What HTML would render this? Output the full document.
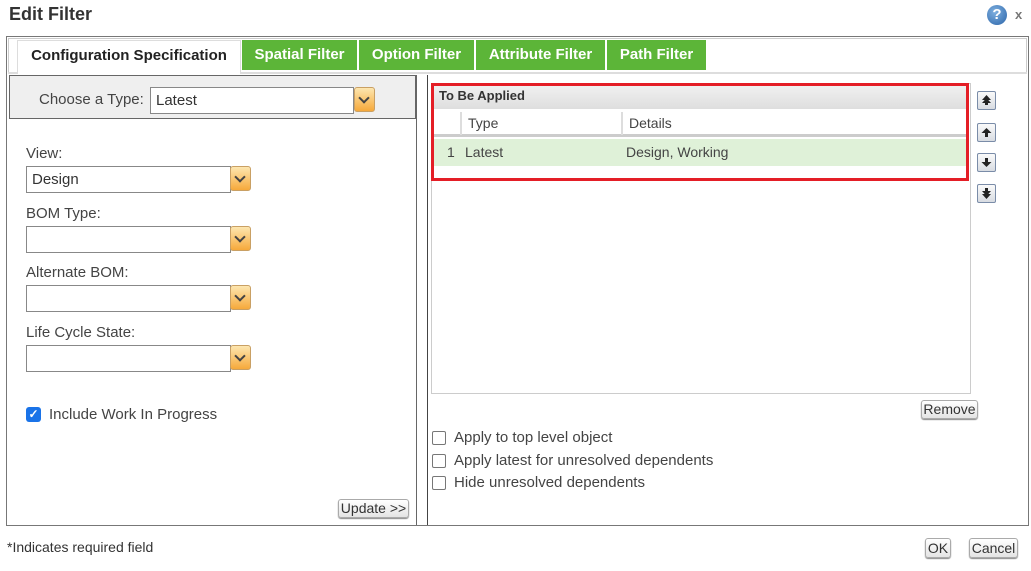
<!DOCTYPE html>
<html><head><meta charset="utf-8"><style>
*{box-sizing:border-box;margin:0;padding:0}
body{width:1031px;height:571px;background:#fff;font-family:"Liberation Sans",Arial,sans-serif;color:#333;position:relative;overflow:hidden;font-size:15px}
.a{position:absolute}
.tab{position:absolute;top:40px;height:30px;background:#5cb538;color:#fff;font-weight:bold;font-size:15px;line-height:30px;text-align:center}
.sel{position:absolute;width:205px;height:27px;border:1px solid #888;background:#fff;font-size:15px;line-height:25px;padding-left:5px}
.arr{position:absolute;width:21px;height:25px;border:1px solid #c9a064;border-radius:3px;background:linear-gradient(#fde6b0,#f6a93b);}
.arr:after{content:"";position:absolute;left:5px;top:6px;width:6px;height:6px;border-right:2.5px solid #444;border-bottom:2.5px solid #444;transform:rotate(45deg)}
.lbl{position:absolute;left:26px;font-size:15px;color:#444}
.btn{position:absolute;border:1px solid #aaa;border-radius:3px;background:linear-gradient(#fff,#e4e4e4);font-size:14px;text-align:center;color:#333;box-shadow:0 1px 1px #888}
.cb{position:absolute;width:14px;height:14px;border:1px solid #777;border-radius:2px;background:#fff}
.mv{position:absolute;left:977px;width:19px;height:19px;border:1px solid #7a8ca8;border-radius:2px;background:linear-gradient(#fafafa,#d8dce2)}
</style></head><body>
<div class="a" style="left:9px;top:4px;font-size:18px;font-weight:bold;color:#333">Edit Filter</div>
<div class="a" style="left:987px;top:5px;width:20px;height:20px;border-radius:50%;background:radial-gradient(circle at 40% 35%,#7fb0e0,#2a64a8);color:#fff;font-weight:bold;font-size:15px;text-align:center;line-height:20px">?</div>
<div class="a" style="left:1015px;top:7px;font-size:13px;color:#777;font-weight:bold">x</div>

<div class="a" style="left:6px;top:36px;width:1023px;height:490px;border:1px solid #777"></div>
<div class="a" style="left:8px;top:38px;width:1019px;height:35px;border:1px solid #ccc;border-bottom:none"></div>
<div class="a" style="left:8px;top:72px;width:1019px;height:2px;background:#ddd"></div>
<div class="a" style="left:17px;top:40px;width:224px;height:34px;background:#fff;border:1px solid #ddd;border-bottom:none;font-weight:bold;font-size:15px;line-height:30px;text-align:center;color:#222">Configuration Specification</div>
<div class="tab" style="left:242px;width:115px">Spatial Filter</div>
<div class="tab" style="left:359px;width:115px">Option Filter</div>
<div class="tab" style="left:476px;width:129px">Attribute Filter</div>
<div class="tab" style="left:607px;width:99px">Path Filter</div>

<div class="a" style="left:9px;top:75px;width:408px;height:450px;border-right:1px solid #666"></div>
<div class="a" style="left:9px;top:75px;width:407px;height:44px;background:#efefef;border:1px solid #666"></div>
<div class="a" style="left:39px;top:91px;font-size:15px;color:#444">Choose a Type:</div>
<div class="sel" style="left:150px;top:87px;width:204px">Latest</div>
<div class="arr" style="left:354px;top:87px"></div>

<div class="lbl" style="top:145px">View:</div>
<div class="sel" style="left:26px;top:166px">Design</div><div class="arr" style="left:230px;top:166px"></div>
<div class="lbl" style="top:205px">BOM Type:</div>
<div class="sel" style="left:26px;top:226px"></div><div class="arr" style="left:230px;top:226px"></div>
<div class="lbl" style="top:264px">Alternate BOM:</div>
<div class="sel" style="left:26px;top:285px"></div><div class="arr" style="left:230px;top:285px"></div>
<div class="lbl" style="top:324px">Life Cycle State:</div>
<div class="sel" style="left:26px;top:345px"></div><div class="arr" style="left:230px;top:345px"></div>

<div class="a" style="left:26px;top:407px;width:15px;height:15px;border-radius:3px;background:#1a73e8;color:#fff;font-size:12px;line-height:15px;text-align:center;font-weight:bold">✓</div>
<div class="a" style="left:49px;top:406px;font-size:15px;color:#444">Include Work In Progress</div>
<div class="btn" style="left:338px;top:499px;width:71px;height:19px;line-height:16px">Update &gt;&gt;</div>

<div class="a" style="left:427px;top:75px;width:1px;height:450px;background:#444"></div>

<div class="a" style="left:431px;top:83px;width:540px;height:311px;border:1px solid #ccc"></div>
<div class="a" style="left:433px;top:86px;width:533px;height:23px;background:linear-gradient(#f0f0f0,#dedede);font-weight:bold;font-size:13px;line-height:20px;padding-left:6px;color:#333">To Be Applied</div>
<div class="a" style="left:433px;top:110px;width:533px;height:27px;background:#fff;border-bottom:3px solid #ccc"></div>
<div class="a" style="left:460px;top:112px;width:2px;height:23px;background:#ddd"></div>
<div class="a" style="left:621px;top:112px;width:2px;height:23px;background:#ddd"></div>
<div class="a" style="left:468px;top:115px;font-size:14px;color:#444">Type</div>
<div class="a" style="left:629px;top:115px;font-size:14px;color:#444">Details</div>
<div class="a" style="left:433px;top:139px;width:533px;height:27px;background:#dff1d8"></div>
<div class="a" style="left:447px;top:144px;font-size:14px;color:#444">1</div>
<div class="a" style="left:465px;top:144px;font-size:14px;color:#444">Latest</div>
<div class="a" style="left:626px;top:144px;font-size:14px;color:#444">Design, Working</div>
<div class="a" style="left:431px;top:83px;width:538px;height:98px;border:3px solid #e41e26"></div>

<div class="mv" style="top:91px"><svg width="17" height="17"><path d="M8.5 3l-4.5 5h9z M8.5 6l-4.5 5h9z" fill="#222"/><rect x="7" y="10" width="3" height="3" fill="#222"/></svg></div>
<div class="mv" style="top:123px"><svg width="17" height="17"><path d="M8.5 4l-5 5h10z" fill="#222"/><rect x="7" y="9" width="3" height="4" fill="#222"/></svg></div>
<div class="mv" style="top:153px"><svg width="17" height="17"><rect x="7" y="4" width="3" height="4" fill="#222"/><path d="M8.5 13l-5-5h10z" fill="#222"/></svg></div>
<div class="mv" style="top:184px"><svg width="17" height="17"><rect x="7" y="3" width="3" height="3" fill="#222"/><path d="M8.5 11l-4.5-5h9z M8.5 14l-4.5-5h9z" fill="#222"/></svg></div>

<div class="btn" style="left:921px;top:400px;width:57px;height:19px;line-height:16px">Remove</div>
<div class="cb" style="left:432px;top:431px"></div><div class="a" style="left:454px;top:429px;color:#444">Apply to top level object</div>
<div class="cb" style="left:432px;top:454px"></div><div class="a" style="left:454px;top:452px;color:#444">Apply latest for unresolved dependents</div>
<div class="cb" style="left:432px;top:476px"></div><div class="a" style="left:454px;top:474px;color:#444">Hide unresolved dependents</div>

<div class="a" style="left:7px;top:539px;font-size:14px;color:#333">*Indicates required field</div>
<div class="btn" style="left:925px;top:538px;width:26px;height:20px;line-height:18px">OK</div>
<div class="btn" style="left:969px;top:538px;width:49px;height:20px;line-height:18px">Cancel</div>
</body></html>
